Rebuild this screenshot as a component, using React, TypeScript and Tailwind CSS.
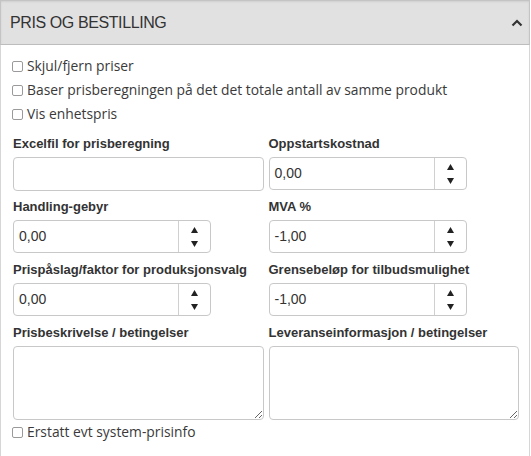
import React from 'react'

const labelFont = { fontFamily: '"Liberation Sans", Arial, sans-serif' }
const bodyFont = { fontFamily: '"Open Sans", Lato, sans-serif' }

function Check({ label }: { label: string }) {
  return (
    <div className="flex items-center h-[24px] gap-[4px] text-[13.85px] text-[#3a3a3a]" style={bodyFont}>
      <span className="w-[11px] h-[11px] rounded-[2px] border border-[#9a9a9a] bg-white shrink-0"></span>
      <span>{label}</span>
    </div>
  )
}

function Label({ children }: { children: React.ReactNode }) {
  return (
    <div className="h-[18px] leading-[18px] mt-[1px] mb-[4px] text-[13px] font-bold text-[#333] whitespace-nowrap" style={labelFont}>
      {children}
    </div>
  )
}

function NumberInput({ value }: { value: string }) {
  return (
    <div className="w-[198px] h-[33px] flex border border-[#c8c8c8] rounded-[4px] bg-white mb-[7px]">
      <div className="flex-1 flex items-center pl-[5px] text-[14px] text-[#333]" style={labelFont}>{value}</div>
      <div className="w-[32px] border-l border-[#d0d0d0] flex flex-col items-center justify-center gap-[8px]">
        <svg width="7" height="6" viewBox="0 0 7 6"><path d="M3.5 0 L7 6 L0 6 Z" fill="#222" /></svg>
        <svg width="7" height="6" viewBox="0 0 7 6"><path d="M0 0 L7 0 L3.5 6 Z" fill="#222" /></svg>
      </div>
    </div>
  )
}

export default function App() {
  return (
    <div className="w-[530px] h-[456px] bg-white">
      <div className="flex items-center justify-between h-[45px] bg-[#e1e1e1] border border-[#c4c4c4] border-b-[#bdbdbd] pl-[9px] pr-[6px] shadow-[inset_0_1px_2px_rgba(0,0,0,0.08)]">
        <span className="text-[16px] tracking-[-0.4px] text-[#333] uppercase" style={labelFont}>Pris og bestilling</span>
        <svg width="12" height="10" viewBox="0 0 12 10" className="mt-[1px]">
          <path d="M1.5 7.5 L6 3 L10.5 7.5" fill="none" stroke="#333" strokeWidth="2.2" />
        </svg>
      </div>
      <div className="h-[411px] border-x border-[#d6d6d6]">
        <div className="pl-[11px] pt-[9px]">
          <Check label="Skjul/fjern priser" />
          <Check label="Baser prisberegningen på det det totale antall av samme produkt" />
          <Check label="Vis enhetspris" />
        </div>
        <div className="grid grid-cols-2 gap-x-[5px] pl-[12px] pr-[10px] mt-[8px]">
          <div>
            <Label>Excelfil for prisberegning</Label>
            <div className="h-[34px] border border-[#c8c8c8] rounded-[4px] bg-white mb-[6px]"></div>
          </div>
          <div>
            <Label>Oppstartskostnad</Label>
            <NumberInput value="0,00" />
          </div>
          <div>
            <Label>Handling-gebyr</Label>
            <NumberInput value="0,00" />
          </div>
          <div>
            <Label>MVA %</Label>
            <NumberInput value="-1,00" />
          </div>
          <div>
            <Label>Prispåslag/faktor for produksjonsvalg</Label>
            <NumberInput value="0,00" />
          </div>
          <div>
            <Label>Grensebeløp for tilbudsmulighet</Label>
            <NumberInput value="-1,00" />
          </div>
          <div>
            <Label>Prisbeskrivelse / betingelser</Label>
            <textarea className="block w-full h-[74px] border border-[#c8c8c8] rounded-[4px] bg-white"></textarea>
          </div>
          <div>
            <Label>Leveranseinformasjon / betingelser</Label>
            <textarea className="block w-full h-[74px] border border-[#c8c8c8] rounded-[4px] bg-white"></textarea>
          </div>
        </div>
        <div className="pl-[11px]">
          <Check label="Erstatt evt system-prisinfo" />
        </div>
      </div>
    </div>
  )
}
